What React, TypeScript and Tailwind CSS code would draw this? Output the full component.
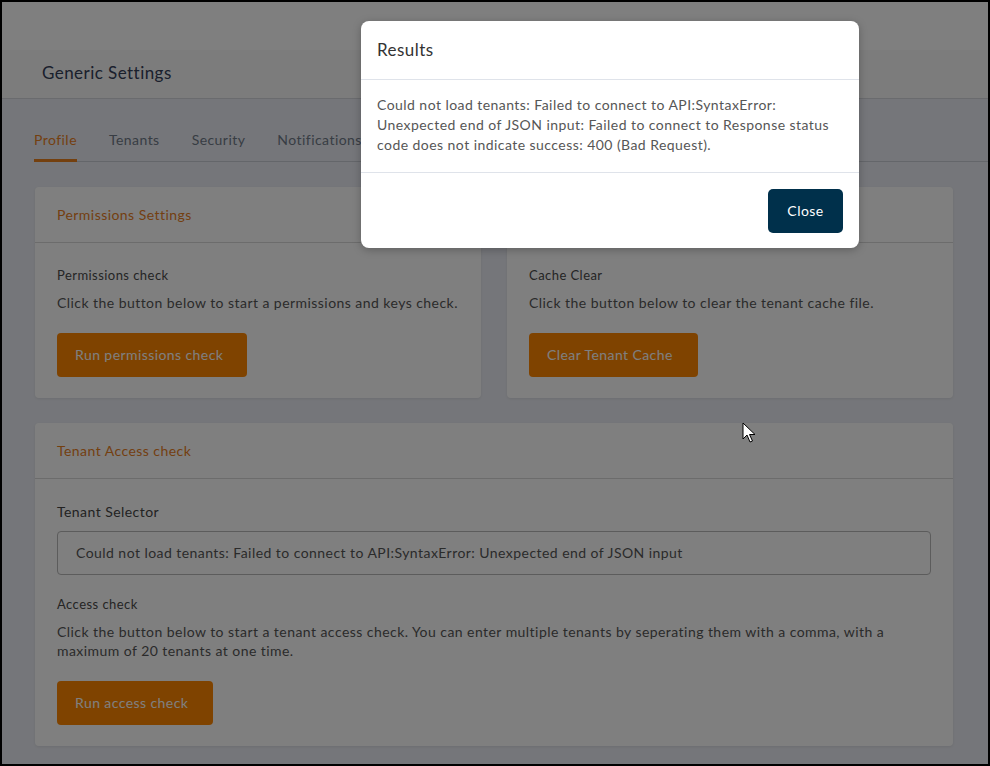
import React from "react";

const font = { fontFamily: "Lato, 'Noto Sans', sans-serif" };

function Card({ title, children }: { title: string; children: React.ReactNode }) {
  return (
    <div className="bg-white rounded-[4px] shadow-[0_1px_3px_rgba(0,0,0,0.08)]">
      <div className="h-[56px] flex items-center px-[22px] border-b border-[#d9d9d9]">
        <span className="text-[14px] text-[#e8801f]">{title}</span>
      </div>
      <div className="pl-[22px] pr-[14px] pt-[23px] pb-[21px]">{children}</div>
    </div>
  );
}

function OrangeButton({ label, w }: { label: string; w: string }) {
  return (
    <button className={`h-[44px] ${w} rounded-[4px] bg-[#fe8600] text-white text-[14px] px-[18px] pb-[2px] text-left tracking-[0.03em]`}>
      {label}
    </button>
  );
}

export default function App() {
  return (
    <div style={font} className="w-[990px] h-[766px] border-2 border-black relative overflow-hidden bg-[#ebedf4] tracking-[0.028em]">
      {/* top nav */}
      <div className="h-[48px] bg-white" />

      {/* page header */}
      <div className="h-[49px] bg-[#f8f8f8] border-b border-[#d4d6dc] flex items-center pl-[40px]">
        <h1 className="text-[17px] text-[#35405a] pb-[2px]">Generic Settings</h1>
      </div>

      {/* tabs */}
      <div className="mt-[30px] ml-[32px] border-b border-[#c9ccd4] flex gap-[32px] h-[33px]">
        <div className="relative text-[14px] text-[#e8801f]">
          Profile
          <div className="absolute left-0 right-0 bottom-[-1px] h-[3px] bg-[#e8801f]" />
        </div>
        <div className="text-[14px] text-[#707a88]">Tenants</div>
        <div className="text-[14px] text-[#707a88]">Security</div>
        <div className="text-[14px] text-[#707a88]">Notifications</div>
      </div>

      <div className="ml-[33px] w-[918px] mt-[25px] flex flex-col gap-[25px]">
        <div className="grid grid-cols-2 gap-[26px]">
          <Card title="Permissions Settings">
            <div className="text-[13px] text-[#4a4a4a] leading-[18px]">Permissions check</div>
            <p className="text-[14px] text-[#565656] mt-[9px] leading-[20px]">
              Click the button below to start a permissions and keys check.
            </p>
            <div className="mt-[20px]">
              <OrangeButton label="Run permissions check" w="w-[190px]" />
            </div>
          </Card>
          <Card title="Cache Clear Settings">
            <div className="text-[13px] text-[#4a4a4a] leading-[18px]">Cache Clear</div>
            <p className="text-[14px] text-[#565656] mt-[9px] leading-[20px]">
              Click the button below to clear the tenant cache file.
            </p>
            <div className="mt-[20px]">
              <OrangeButton label="Clear Tenant Cache" w="w-[169px]" />
            </div>
          </Card>
        </div>

        <Card title="Tenant Access check">
          <div className="text-[14px] text-[#454545] leading-[20px]">Tenant Selector</div>
          <div className="mt-[9px] mr-[8px] h-[44px] rounded-[4px] border border-[#b8b8b8] flex items-center px-[18px] pb-[1px] text-[14px] text-[#565656]">
            Could not load tenants: Failed to connect to API:SyntaxError: Unexpected end of JSON input
          </div>
          <div className="text-[13px] text-[#4a4a4a] leading-[18px] mt-[20px]">Access check</div>
          <p className="text-[14px] text-[#565656] mt-[9px] leading-[19px] pr-[28px]">
            Click the button below to start a tenant access check. You can enter multiple tenants by seperating them with a comma, with a maximum of 20 tenants at one time.
          </p>
          <div className="mt-[21px]">
            <OrangeButton label="Run access check" w="w-[156px]" />
          </div>
        </Card>
      </div>

      {/* backdrop */}
      <div className="absolute inset-0 bg-black/50" />

      {/* modal */}
      <div className="absolute left-[359px] top-[19px] w-[498px] bg-white rounded-[8px] shadow-[0_2px_8px_rgba(0,0,0,0.25)]">
        <div className="h-[59px] flex items-center px-[16px] border-b border-[#dfe3ea]">
          <h2 className="text-[17px] text-[#333] pb-[1px]">Results</h2>
        </div>
        <div className="px-[16px] pt-[15px] pb-[17px] border-b border-[#dfe3ea]">
          <p className="text-[14px] leading-[20px] text-[#565656]">
            Could not load tenants: Failed to connect to API:SyntaxError: Unexpected end of JSON input: Failed to connect to Response status code does not indicate success: 400 (Bad Request).
          </p>
        </div>
        <div className="flex justify-end px-[16px] pt-[16px] pb-[15px]">
          <button className="h-[44px] w-[75px] rounded-[5px] bg-[#00304b] text-white text-[14px] pb-[2px]">Close</button>
        </div>
      </div>

      {/* mouse pointer */}
      <svg className="absolute left-[740px] top-[420px]" width="14" height="22" viewBox="0 0 14 22">
        <path d="M1 1 L1 17 L5 13 L8 20 L10.5 19 L7.5 12.5 L13 12.5 Z" fill="white" stroke="black" strokeWidth="1" strokeLinejoin="round" />
      </svg>
    </div>
  );
}
